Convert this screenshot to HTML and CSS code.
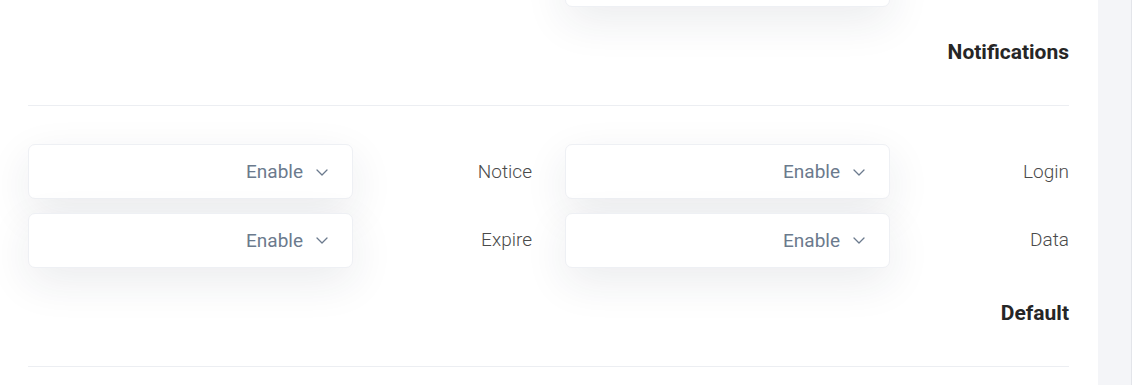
FILE: index.html
```html
<!DOCTYPE html>
<html lang="en">
<head>
<meta charset="utf-8">
<title>Settings</title>
<link rel="stylesheet" href="styles.css">
</head>
<body>
<div class="layout">
  <main class="content">
    <div class="rows rows-prev">
      <div class="field field-empty"></div>
      <div class="field">
        <div class="select"></div>
      </div>
    </div>

    <div class="section-head"><h2 class="title">Notifications</h2></div>
    <div class="rows">
      <div class="field">
        <div class="select"><span class="value">Enable</span><svg class="chev" viewBox="0 0 12 7" width="12" height="7"><path d="M1 1l5 5 5-5" fill="none" stroke="currentColor" stroke-width="1.3" stroke-linecap="round" stroke-linejoin="round"/></svg></div>
        <label class="label">Notice</label>
      </div>
      <div class="field">
        <div class="select"><span class="value">Enable</span><svg class="chev" viewBox="0 0 12 7" width="12" height="7"><path d="M1 1l5 5 5-5" fill="none" stroke="currentColor" stroke-width="1.3" stroke-linecap="round" stroke-linejoin="round"/></svg></div>
        <label class="label">Login</label>
      </div>
      <div class="field">
        <div class="select"><span class="value">Enable</span><svg class="chev" viewBox="0 0 12 7" width="12" height="7"><path d="M1 1l5 5 5-5" fill="none" stroke="currentColor" stroke-width="1.3" stroke-linecap="round" stroke-linejoin="round"/></svg></div>
        <label class="label">Expire</label>
      </div>
      <div class="field">
        <div class="select"><span class="value">Enable</span><svg class="chev" viewBox="0 0 12 7" width="12" height="7"><path d="M1 1l5 5 5-5" fill="none" stroke="currentColor" stroke-width="1.3" stroke-linecap="round" stroke-linejoin="round"/></svg></div>
        <label class="label">Data</label>
      </div>
    </div>

    <div class="section-head"><h2 class="title">Default</h2></div>
  </main>
  <aside class="side"></aside>
</div>
</body>
</html>
```
FILE: styles.css
```css
html, body {
  margin: 0;
  padding: 0;
  background: #ffffff;
  height: 100%;
  overflow: hidden;
}
body {
  font-family: Roboto, "Liberation Sans", Arial, sans-serif;
}
.layout {
  display: flex;
  height: 385px;
}
.content {
  width: 1041px;
  padding: 0 29px 0 28px;
  flex: none;
}
.side {
  width: 33px;
  background: #f4f5f8;
  border-right: 1px solid #e3e5ea;
  flex: none;
}
.rows {
  display: grid;
  grid-template-columns: 504px 504px;
  column-gap: 33px;
  row-gap: 13.5px;
  padding-top: 38px;
}
.rows-prev {
  padding-top: 0;
  margin-top: -48px;
}
.field {
  display: flex;
  align-items: center;
  height: 55px;
}
.select {
  box-sizing: border-box;
  width: 325px;
  height: 55px;
  flex: none;
  display: flex;
  align-items: center;
  justify-content: flex-end;
  gap: 13px;
  padding-right: 24px;
  background: #ffffff;
  border: 1px solid #eef0f4;
  border-radius: 7px;
  box-shadow: 0 14px 44px rgba(30, 41, 70, 0.09);
  color: #6b7a8d;
}
.value {
  font-size: 19px;
  font-weight: 400;
  line-height: 1;
}
.chev {
  display: block;
  margin-top: 1px;
}
.label {
  flex: 1;
  text-align: right;
  font-size: 19px;
  font-weight: 300;
  color: #4a4a4a;
  margin-top: -1px;
}
.section-head {
  padding: 30px 0 38px;
  border-bottom: 1px solid #eceef2;
}
.title {
  margin: 0;
  text-align: right;
  font-size: 21px;
  line-height: 30px;
  font-weight: 700;
  color: #262626;
}
```
